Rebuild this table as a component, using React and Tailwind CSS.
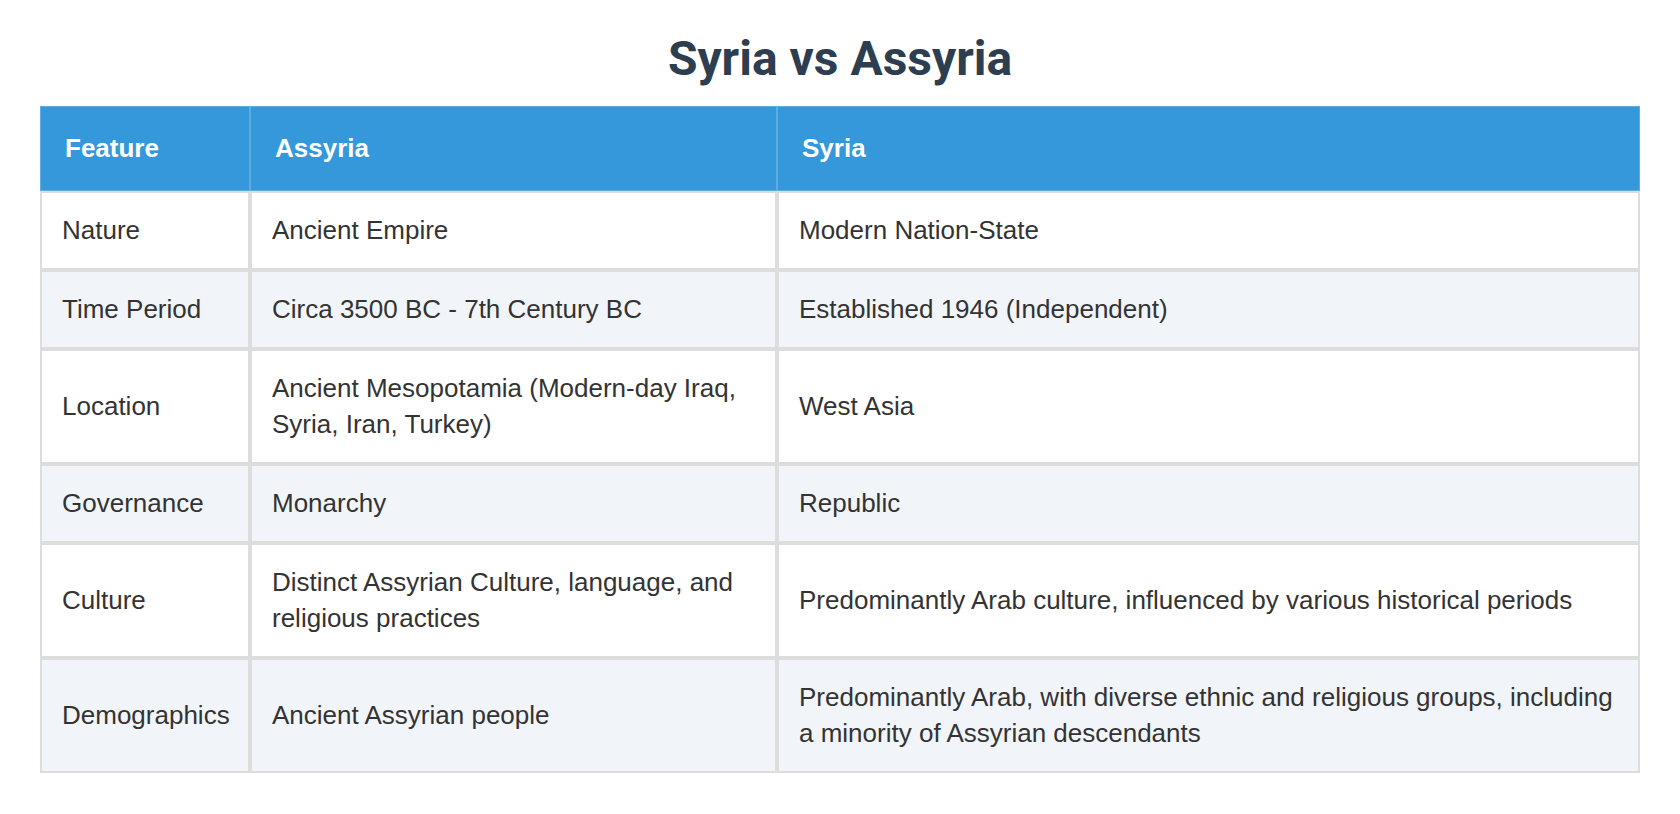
const rows = [
  ["Nature", "Ancient Empire", "Modern Nation-State"],
  ["Time Period", "Circa 3500 BC - 7th Century BC", "Established 1946 (Independent)"],
  ["Location", "Ancient Mesopotamia (Modern-day Iraq, Syria, Iran, Turkey)", "West Asia"],
  ["Governance", "Monarchy", "Republic"],
  ["Culture", "Distinct Assyrian Culture, language, and religious practices", "Predominantly Arab culture, influenced by various historical periods"],
  ["Demographics", "Ancient Assyrian people", "Predominantly Arab, with diverse ethnic and religious groups, including a minority of Assyrian descendants"],
];

const App = () => {
  return (
    <div className="min-h-screen bg-white px-[40px] pt-[30px] pb-[40px] font-['Liberation_Sans',Arial,sans-serif]">
      <h1 className="text-center text-[48px] leading-[1.2] font-bold text-[#2c3e50] font-['Roboto',sans-serif] mb-[18px]">
        Syria vs Assyria
      </h1>
      <table className="w-full table-fixed border-separate border-spacing-0 text-[26px] leading-[35.8px] text-[#333]">
        <thead>
          <tr className="bg-[#3498db] text-white">
            <th className="w-[210px] border border-[#5dade2] px-[24px] pt-[24.5px] pb-[23.5px] text-left font-bold">Feature</th>
            <th className="w-[527px] border border-[#5dade2] px-[24px] pt-[24.5px] pb-[23.5px] text-left font-bold">Assyria</th>
            <th className="border border-[#5dade2] px-[24px] pt-[24.5px] pb-[23.5px] text-left font-bold">Syria</th>
          </tr>
        </thead>
        <tbody>
          {rows.map((r, i) => (
            <tr key={r[0]} className={i % 2 === 1 ? "bg-[#f1f5f9]" : "bg-white"}>
              {r.map((c, j) => (
                <td key={j} className="border-2 border-[#ddd] px-[20px] pt-[20px] pb-[19.2px] align-middle">
                  {c}
                </td>
              ))}
            </tr>
          ))}
        </tbody>
      </table>
    </div>
  );
};

export default App;
